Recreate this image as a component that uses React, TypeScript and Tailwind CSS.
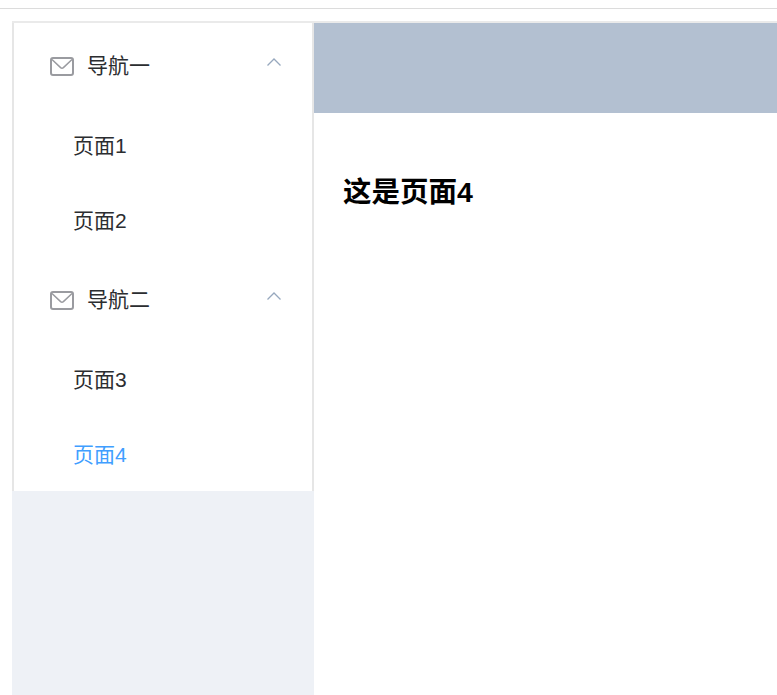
import React from 'react';

const cjk = "font-['Liberation_Sans','Noto_Sans_CJK_SC',sans-serif]";

const MailIcon = () => (
    <svg width="24" height="19" viewBox="0 0 24 19" fill="none" stroke="#9a9ba0" className="mt-[2px] shrink-0">
        <rect x="1" y="1" width="22" height="17" rx="2" strokeWidth="2" />
        <path d="M2 2.5 L10.6 10.6 Q12 11.8 13.4 10.6 L22 2.5" strokeWidth="1.5" />
    </svg>
);

const ChevronUp = () => (
    <svg width="14" height="8" viewBox="0 0 14 8" fill="none" stroke="#97a8be" strokeWidth="1.3" className="shrink-0">
        <path d="M0.5 7.5 L7 1 L13.5 7.5" />
    </svg>
);

const groups = [
    { title: '导航一', pages: ['页面1', '页面2'] },
    { title: '导航二', pages: ['页面3', '页面4'] },
];

const App: React.FC = () => {
    return (
        <div className={`h-[695px] overflow-hidden bg-white ${cjk}`}>
            <div className="mt-2 h-px bg-[#dcdcdc]" />
            <div className="ml-3 mt-3 flex h-[674px] border-t-2 border-[#eaeaea]">
                <aside className="h-full w-[302px] shrink-0 bg-[#eef1f6]">
                    <ul className="border-x-2 border-[#e6e6e6] bg-white text-[21px] text-[#2b2d30]">
                        {groups.map((group) => (
                            <li key={group.title}>
                                <div className="flex h-[84px] items-center pl-[36px] pr-[31px]">
                                    <MailIcon />
                                    <span className="ml-[13px] flex-1 pt-[2px]">{group.title}</span>
                                    <span className="mb-[6px] flex">
                                        <ChevronUp />
                                    </span>
                                </div>
                                {group.pages.map((page) => (
                                    <div
                                        key={page}
                                        className={`flex h-[75px] items-center pl-[59px] pt-[2px] ${page === '页面4' ? 'text-[#409eff]' : ''}`}
                                    >
                                        {page}
                                    </div>
                                ))}
                            </li>
                        ))}
                    </ul>
                </aside>
                <main className="flex-1">
                    <div className="h-[90px] bg-[#b3c0d1]" />
                    <div className="p-[30px]">
                        <h3 className="mt-[30px] -ml-px text-[28.5px] leading-[38px] font-bold text-black">这是页面4</h3>
                    </div>
                </main>
            </div>
        </div>
    );
};

export default App;
